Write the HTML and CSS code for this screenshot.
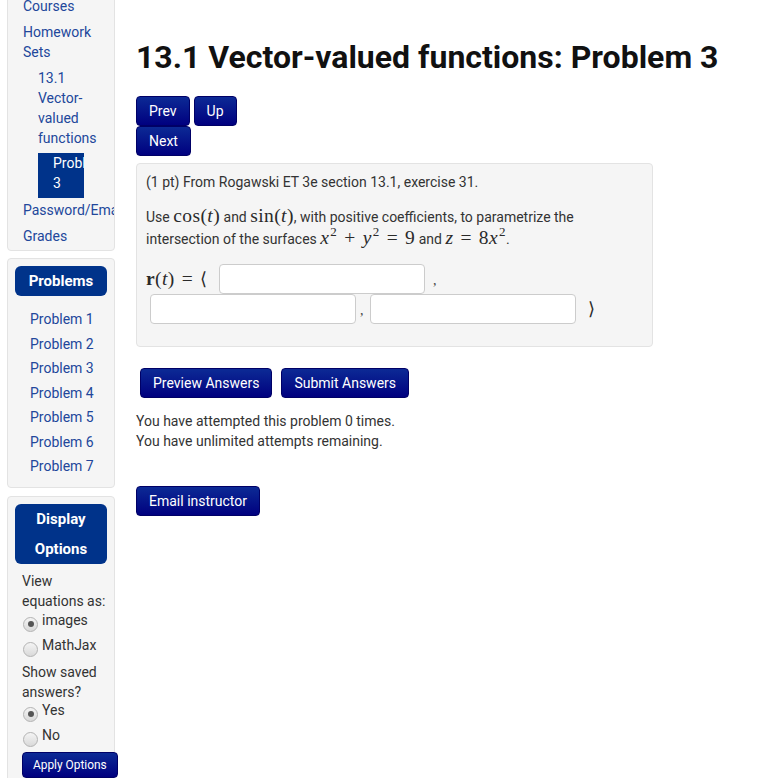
FILE: index.html
```html
<!DOCTYPE html>
<html lang="en">
<head>
<meta charset="utf-8">
<title>13.1 Vector-valued functions: Problem 3</title>
<link rel="stylesheet" href="styles.css">
</head>
<body>
<div class="page">
  <aside class="sidebar">
    <nav class="well navbox">
      <ul class="nav">
        <li><a href="#">Courses</a></li>
        <li><a href="#">Homework Sets</a></li>
        <li class="setitem">
          <a href="#" class="setlink">13.1 Vector-valued functions</a>
          <ul class="nav3">
            <li class="active"><a href="#">Problem 3</a></li>
          </ul>
        </li>
        <li class="pw"><a href="#">Password/Email</a></li>
        <li><a href="#">Grades</a></li>
      </ul>
    </nav>

    <div class="well probbox">
      <h3 class="sidehead">Problems</h3>
      <ul class="problist">
        <li><a href="#">Problem 1</a></li>
        <li><a href="#">Problem 2</a></li>
        <li><a href="#">Problem 3</a></li>
        <li><a href="#">Problem 4</a></li>
        <li><a href="#">Problem 5</a></li>
        <li><a href="#">Problem 6</a></li>
        <li><a href="#">Problem 7</a></li>
      </ul>
    </div>

    <div class="well optbox">
      <h3 class="sidehead">Display Options</h3>
      <div class="optlabel first">View equations as:</div>
      <label class="radio eq-first"><input type="radio" name="eq" checked><span>images</span></label>
      <label class="radio"><input type="radio" name="eq"><span>MathJax</span></label>
      <div class="optlabel second">Show saved answers?</div>
      <label class="radio sv-first"><input type="radio" name="sv" checked><span>Yes</span></label>
      <label class="radio"><input type="radio" name="sv"><span>No</span></label>
      <button class="btn btn-small" type="button">Apply Options</button>
    </div>
  </aside>

  <main class="main">
    <h2 class="title">13.1 Vector-valued functions: Problem 3</h2>

    <div class="navbtns">
      <div class="btnrow">
        <button class="btn" type="button">Prev</button>
        <button class="btn" type="button">Up</button>
      </div>
      <div class="btnrow">
        <button class="btn" type="button">Next</button>
      </div>
    </div>

    <div class="problem">
      <p class="source">(1 pt) From Rogawski ET 3e section 13.1, exercise 31.</p>
      <p class="statement">Use <span class="m"><span class="rm">cos</span>(<i>t</i>)</span> and <span class="m"><span class="rm">sin</span>(<i>t</i>)</span>, with positive coefficients, to parametrize the intersection of the surfaces <span class="m"><i>x</i><span class="sup">2</span><span class="op">+</span><i>y</i><span class="sup">2</span><span class="op">=</span>9</span> and <span class="m"><i>z</i><span class="op">=</span>8<i>x</i><span class="sup">2</span></span>.</p>
      <div class="ansrow first">
        <span class="m lhs"><b>r</b>(<i>t</i>)<span class="op">=</span><span class="ang">⟨</span></span>
        <input type="text" class="ans">
        <span class="comma">,</span>
      </div>
      <div class="ansrow second">
        <input type="text" class="ans">
        <span class="comma">,</span>
        <input type="text" class="ans">
        <span class="m ang close">⟩</span>
      </div>
    </div>

    <div class="submitrow">
      <button class="btn" type="button">Preview Answers</button>
      <button class="btn" type="button">Submit Answers</button>
    </div>

    <div class="attempts">
      <div>You have attempted this problem 0 times.</div>
      <div>You have unlimited attempts remaining.</div>
    </div>

    <div class="emailrow">
      <button class="btn" type="button">Email instructor</button>
    </div>
  </main>
</div>
</body>
</html>
```

FILE: styles.css
```css
html, body {
  margin: 0;
  padding: 0;
  height: 778px;
  overflow: hidden;
  background: #fff;
}

body {
  font-family: Roboto, "Liberation Sans", sans-serif;
  font-size: 14px;
  line-height: 20px;
  color: #333;
}

a {
  color: #22479b;
  text-decoration: none;
}

ul {
  list-style: none;
  margin: 0;
  padding: 0;
}

.page {
  display: flex;
  align-items: flex-start;
  gap: 21px;
  padding-left: 7px;
}

/* ---------- sidebar ---------- */
.sidebar {
  width: 108px;
  flex: none;
  margin-top: -8px;
  display: flex;
  flex-direction: column;
}

.well {
  background: #f5f5f5;
  border: 1px solid #e3e3e3;
  border-radius: 4px;
  box-sizing: border-box;
  width: 108px;
}

.navbox {
  padding: 0 15px 1px 15px;
  overflow: hidden;
}

.nav > li {
  padding: 3px 0;
}

.nav .setitem {
  padding-left: 15px;
  padding-bottom: 0;
}

.nav .setlink {
  display: block;
}

.nav3 {
  margin-top: 5px;
}

.nav3 .active {
  width: 46px;
  box-sizing: border-box;
  background: #00338a;
  overflow: hidden;
  padding: 0 0 5px 15px;
}

.nav3 .active a {
  color: #fff;
  display: block;
  width: 31px;
}

.nav .pw {
  padding-top: 2px;
  white-space: nowrap;
}

.sidehead {
  margin: 0;
  background: #00338a;
  color: #fff;
  border-radius: 6px;
  font-size: 15px;
  font-weight: 700;
  line-height: 30px;
  text-align: center;
}

.probbox {
  margin-top: 7px;
  padding: 7px 7px 8px 7px;
}

.problist {
  margin-top: 11px;
  padding-left: 15px;
}

.problist li {
  line-height: 24.5px;
}

.optbox {
  margin-top: 8px;
  padding: 7px 7px 0 7px;
  height: 300px;
}

.optlabel {
  padding-left: 7px;
  color: #333;
}

.optlabel.first {
  margin-top: 7px;
}

.optlabel.second {
  margin-top: 2px;
}

.radio {
  display: flex;
  align-items: flex-start;
  height: 25px;
  padding-left: 8px;
  color: #333;
}

.radio.eq-first {
  margin-top: -1px;
}

.radio.sv-first {
  margin-top: -2px;
}

.radio input {
  -webkit-appearance: none;
  appearance: none;
  width: 15px;
  height: 15px;
  margin: 7px 4px 0 0;
  border: 1px solid #b3b3b3;
  border-radius: 50%;
  background: linear-gradient(#f4f4f4, #d9d9d9);
  box-sizing: border-box;
  position: relative;
  flex: none;
}

.radio input:checked::after {
  content: "";
  position: absolute;
  left: 3.5px;
  top: 3.5px;
  width: 6px;
  height: 6px;
  border-radius: 50%;
  background: #555;
}

.btn {
  font-family: Roboto, "Liberation Sans", sans-serif;
  font-size: 14px;
  line-height: 20px;
  color: #fff;
  padding: 4px 12px;
  border: 1px solid #000066;
  border-radius: 4px;
  background: linear-gradient(#0c2a95, #00007f);
  cursor: pointer;
  margin: 0;
}

.btn-small {
  font-size: 11.9px;
  padding: 2px 10px;
  margin: 2px 0 0 7px;
  align-self: flex-start;
  white-space: nowrap;
}

/* ---------- main ---------- */
.main {
  flex: 1;
  padding-top: 37px;
}

.title {
  margin: 0;
  font-size: 32px;
  line-height: 40px;
  font-weight: 700;
  color: #111;
}

.navbtns {
  margin-top: 19px;
}

.btnrow {
  display: flex;
  gap: 4px;
}

.problem {
  margin-top: 7px;
  width: 517px;
  box-sizing: border-box;
  background: #f5f5f5;
  border: 1px solid #e3e3e3;
  border-radius: 4px;
  padding: 8px 9px 22px 9px;
}

.problem p {
  margin: 0;
}

.source {
  line-height: 20px;
}

.statement {
  margin-top: 14px !important;
  line-height: 22px;
}

.m {
  font-family: "Liberation Serif", "DejaVu Serif", serif;
  font-size: 19.5px;
  letter-spacing: 0.4px;
  line-height: 0;
  color: #2a2a2a;
}

.m i {
  font-style: italic;
}

.m b {
  font-weight: 700;
}

.op {
  margin: 0 7px;
}

.sup {
  font-size: 13px;
  vertical-align: 8px;
  line-height: 0;
  margin-left: 1px;
}

.ansrow {
  display: flex;
  align-items: center;
  height: 30px;
}

.ansrow.first {
  margin-top: 14px;
}

.lhs {
  width: 67px;
  margin-right: 6px;
  white-space: nowrap;
  line-height: 1;
}

.ang {
  font-family: "DejaVu Serif", serif;
  font-weight: 300;
  font-size: 18px;
}

.ans {
  width: 206px;
  height: 30px;
  box-sizing: border-box;
  border: 1px solid #cccccc;
  border-radius: 4px;
  background: #fff;
  margin: 0;
  padding: 4px 6px;
}

.comma {
  font-family: "Liberation Serif", serif;
  font-size: 14px;
  color: #444;
  margin: 4px 0 0 0;
}

.ansrow.first .comma {
  margin-left: 8px;
}

.ansrow.second {
  padding-left: 4px;
}

.ansrow.second .comma {
  width: 14px;
  box-sizing: border-box;
  padding-left: 4px;
}

.close {
  margin-left: 12px;
  line-height: 1;
}

.submitrow {
  margin-top: 21px;
  padding-left: 4px;
  display: flex;
  gap: 9px;
}

.attempts {
  margin-top: 13px;
  color: #333;
}

.emailrow {
  margin-top: 35px;
}
```
